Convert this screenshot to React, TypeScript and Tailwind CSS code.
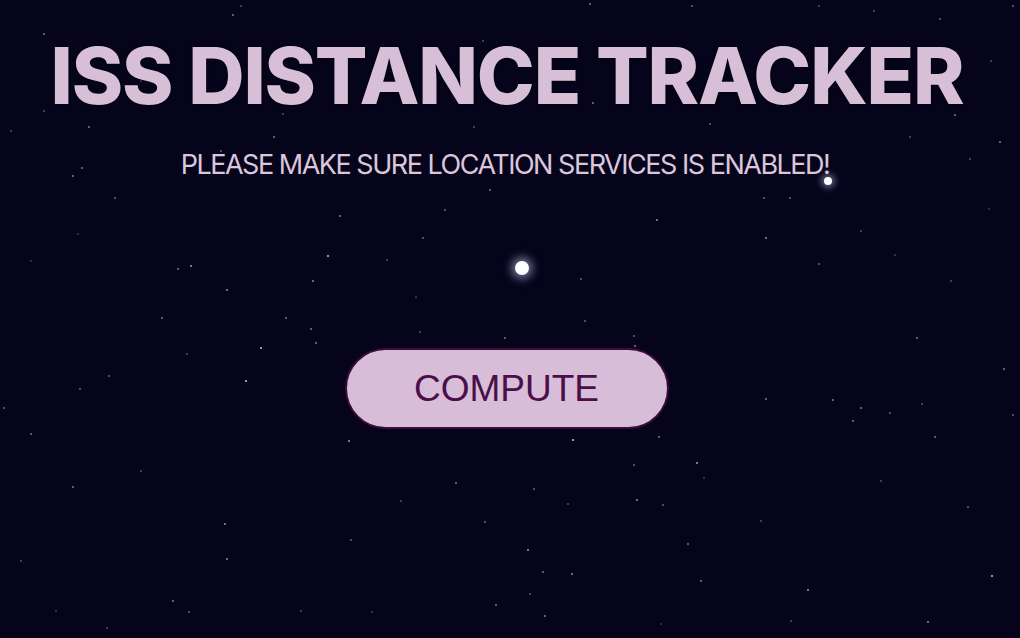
import React from "react";

type Star = [number, number, number?];

// Faint background stars: x, y, brightness (0..1)
const STARS: Star[] = [
  [232, 14, 0.6], [43, 33, 0.6], [43, 110, 0.4], [88, 126, 0.6], [10, 130, 0.4],
  [273, 136, 0.6], [482, 40, 0.4], [473, 126, 0.4], [282, 113, 0.4], [81, 167, 0.6],
  [72, 175, 0.6], [220, 150, 0.5], [489, 189, 0.6], [114, 197, 0.5], [589, 3, 0.6],
  [691, 5, 0.5], [939, 18, 0.5], [954, 114, 0.6], [709, 123, 0.5], [909, 136, 0.4],
  [999, 141, 0.6], [969, 158, 0.4], [592, 102, 0.6], [818, 5, 0.4], [873, 10, 0.4],
  [1012, 5, 0.5], [77, 233, 0.3], [339, 215, 0.6], [444, 209, 0.5], [422, 237, 0.5],
  [177, 268, 0.6], [190, 265, 0.8], [327, 255, 1], [312, 280, 0.7], [226, 289, 0.7],
  [386, 259, 0.4], [161, 317, 0.6], [285, 317, 0.6], [310, 328, 0.6], [315, 342, 0.6],
  [415, 296, 0.3], [419, 331, 0.4], [504, 337, 0.6], [260, 347, 1], [186, 353, 0.4],
  [108, 375, 0.5], [79, 388, 0.5], [245, 380, 1], [656, 219, 0.7], [763, 197, 0.5],
  [789, 197, 0.5], [765, 237, 0.7], [818, 263, 0.5], [894, 254, 0.3], [580, 278, 0.5],
  [584, 320, 0.5], [633, 335, 0.5], [634, 345, 0.6], [916, 337, 0.6], [1003, 368, 0.6],
  [988, 208, 0.3], [765, 398, 0.6], [832, 399, 0.6], [572, 439, 1], [658, 436, 0.6],
  [633, 464, 0.5], [696, 462, 0.8], [703, 477, 0.3], [533, 488, 0.5], [567, 503, 0.4],
  [636, 499, 0.7], [662, 504, 0.5], [527, 549, 0.8], [687, 543, 0.6], [542, 571, 0.6],
  [571, 573, 0.7], [700, 580, 0.6], [529, 593, 0.4], [544, 615, 0.6], [807, 589, 0.8],
  [991, 575, 1], [927, 621, 0.7], [967, 506, 0.5], [934, 436, 0.6], [852, 420, 0.6],
  [860, 407, 0.6], [889, 412, 0.5], [921, 403, 0.4], [1012, 414, 0.5], [660, 623, 0.3],
  [3, 407, 0.5], [30, 433, 0.6], [348, 440, 0.8], [72, 486, 0.6], [455, 482, 0.6],
  [484, 521, 0.5], [224, 523, 0.7], [350, 539, 0.5], [226, 558, 0.7], [172, 600, 0.6],
  [188, 611, 0.5], [55, 610, 0.3], [106, 627, 0.4], [495, 604, 0.6], [371, 611, 0.3],
  [240, 5, 0.4], [380, 60, 0.3], [140, 80, 0.3], [30, 260, 0.3], [990, 60, 0.4],
  [770, 60, 0.3], [860, 230, 0.4], [950, 280, 0.4], [880, 480, 0.4], [760, 520, 0.4],
  [790, 620, 0.4], [400, 500, 0.4], [300, 610, 0.4], [140, 470, 0.4], [20, 560, 0.4],
];

function Starfield() {
  return (
    <div className="pointer-events-none absolute inset-0 overflow-hidden">
      {STARS.map(([x, y, b = 0.5], i) => (
        <span
          key={i}
          className="absolute h-[2px] w-[2px] rounded-full bg-[#c8c8d8]"
          style={{ left: x, top: y, opacity: b }}
        />
      ))}
      {/* bright glowing stars */}
      <span className="absolute left-[515px] top-[261px] h-[14px] w-[14px] rounded-full bg-white shadow-[0_0_8px_4px_rgba(210,210,255,0.5)]" />
      <span className="absolute left-[824px] top-[177px] h-[8px] w-[8px] rounded-full bg-white shadow-[0_0_6px_3px_rgba(210,210,255,0.45)]" />
    </div>
  );
}

export default function App() {
  return (
    <div className="relative h-[638px] w-[1020px] overflow-hidden bg-[#05041a]">
      <Starfield />
      <div className="relative flex flex-col items-center">
        <h1 className="ml-[-6px] mt-[37px] font-['Inter','Noto_Sans',sans-serif] text-[78px] font-extrabold leading-none tracking-[-0.015em] text-[#d8bfd8] [text-shadow:0_0_2px_#000]">
          ISS DISTANCE TRACKER
        </h1>
        <p className="ml-[-10px] mt-[36px] font-['Inter','Noto_Sans',sans-serif] text-[27px] leading-none tracking-[-0.055em] text-[#dcc6dc]">
          PLEASE MAKE SURE LOCATION SERVICES IS ENABLED!
        </p>
        <button className="ml-[-7px] mt-[170px] flex h-[81px] w-[324px] items-center justify-center rounded-full border-2 border-[#3b0b3b] bg-[#d7bdd8] font-['Liberation_Sans',Arial,sans-serif] text-[37px] leading-none text-[#4a0e48]">
          COMPUTE
        </button>
      </div>
    </div>
  );
}
